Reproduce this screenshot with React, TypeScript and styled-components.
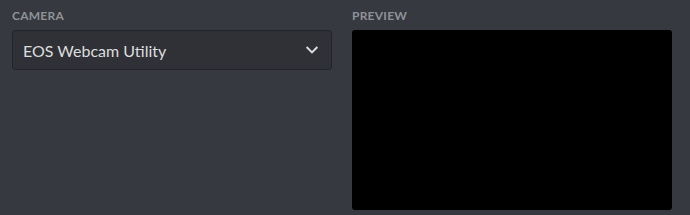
import React from 'react';
import styled, { createGlobalStyle } from 'styled-components';

const GlobalStyle = createGlobalStyle`
  html, body {
    margin: 0;
    padding: 0;
    background: #36393f;
    font-family: Lato, "Open Sans", "Liberation Sans", sans-serif;
  }
`;

const Page = styled.div`
  width: 690px;
  height: 215px;
  box-sizing: border-box;
  padding: 8px 18px 5px 12px;
  display: grid;
  grid-template-columns: 320px 320px;
  column-gap: 20px;
`;

const Column = styled.div`
  display: flex;
  flex-direction: column;
`;

const Label = styled.h5`
  margin: 0 0 6px;
  font-size: 12px;
  line-height: 16px;
  font-weight: 700;
  letter-spacing: 0.02em;
  text-transform: uppercase;
  color: #8e9297;
`;

const Select = styled.div`
  height: 40px;
  box-sizing: border-box;
  display: flex;
  align-items: center;
  justify-content: space-between;
  padding: 0 12px 0 10px;
  background: #2f3136;
  border: 1px solid #222428;
  border-radius: 3px;
  color: #dcddde;
  font-size: 16px;
  cursor: pointer;
`;

const Preview = styled.div<{ $height: number }>`
  height: ${p => p.$height}px;
  background: #000;
  border-radius: 3px;
`;

const Chevron = () => (
  <svg width="14" height="14" viewBox="0 0 24 24" fill="none">
    <path d="M4 8l8 8 8-8" stroke="#dcddde" strokeWidth="3.4" strokeLinecap="square" />
  </svg>
);

export default function App() {
  return (
    <>
      <GlobalStyle />
      <Page>
        <Column>
          <Label>Camera</Label>
          <Select>
            <span>EOS Webcam Utility</span>
            <Chevron />
          </Select>
        </Column>
        <Column>
          <Label>Preview</Label>
          <Preview $height={180} />
        </Column>
      </Page>
    </>
  );
}
